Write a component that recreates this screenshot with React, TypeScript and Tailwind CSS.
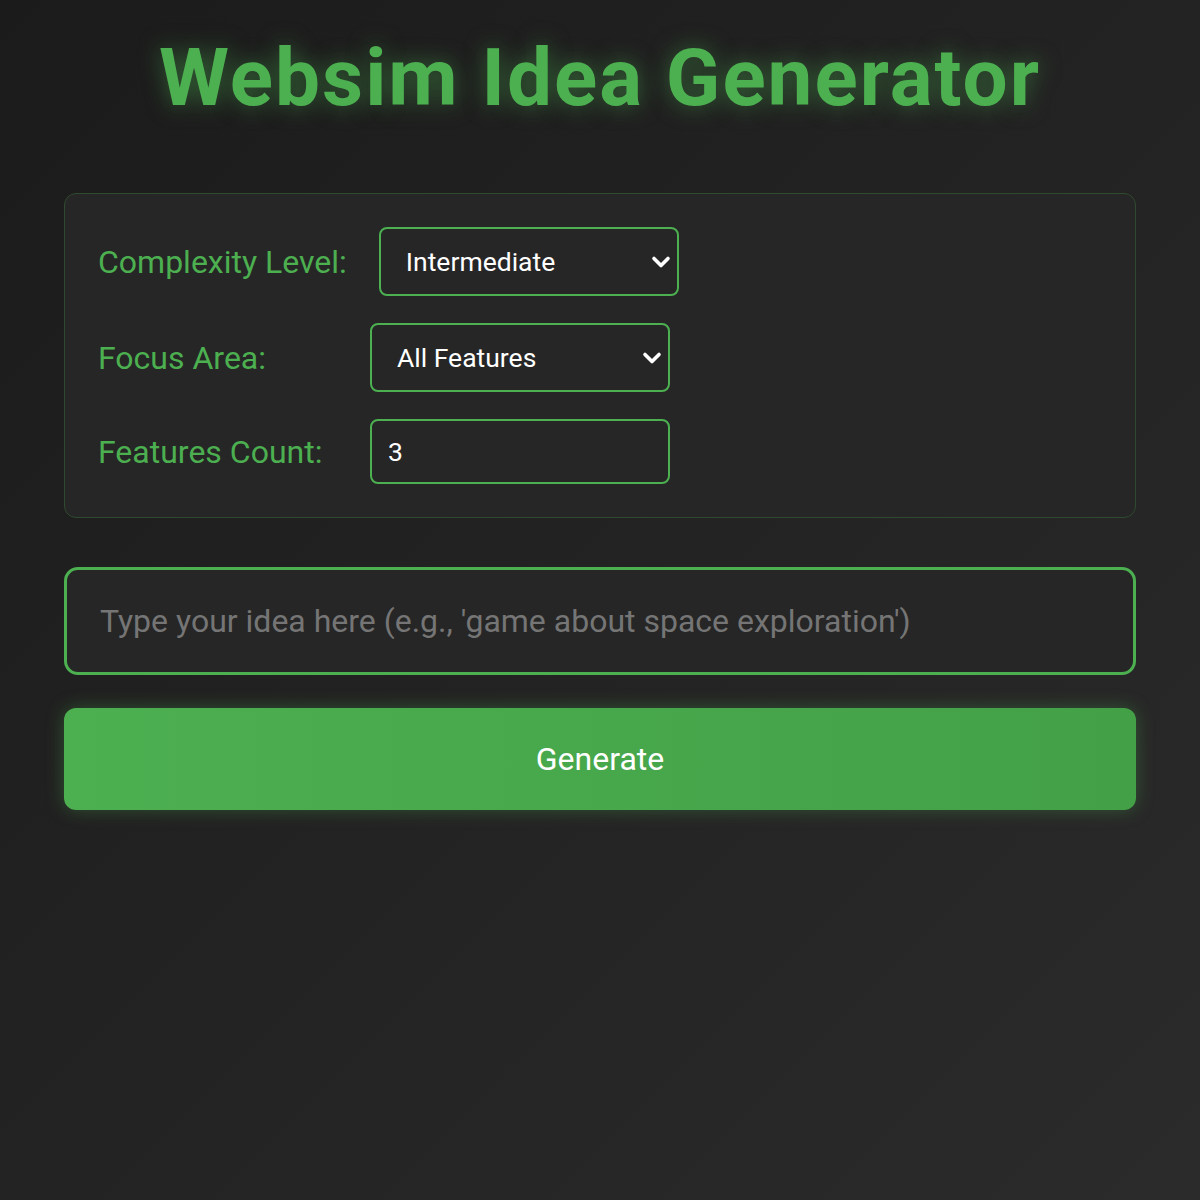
import { useState } from "react";

const Chevron = () => (
  <svg
    className="pointer-events-none absolute right-[8px] top-1/2 -translate-y-1/2"
    width="20"
    height="14"
    viewBox="0 0 20 14"
    fill="none"
  >
    <path d="M3 3.5l7 7 7-7" stroke="white" strokeWidth="3.6" strokeLinecap="round" strokeLinejoin="round" />
  </svg>
);

export default function App() {
  const [complexity, setComplexity] = useState("intermediate");
  const [focus, setFocus] = useState("all");
  const [count, setCount] = useState("3");
  const [idea, setIdea] = useState("");

  return (
    <div
      className="min-h-[1200px] w-full bg-gradient-to-br from-[#1b1b1b] to-[#2b2b2b] px-16 pt-[30px] text-white"
      style={{ fontFamily: "Roboto, 'Liberation Sans', sans-serif" }}
    >
      <h1 className="text-center text-[80px] font-bold leading-[96px] tracking-[2px] text-[#4caf50] [text-shadow:0_0_22px_rgba(76,175,80,0.5)]">
        Websim Idea Generator
      </h1>

      <div className="mt-[67px] rounded-xl border border-[#2f4a2f] bg-[#262626] px-[33px] py-[33px]">
        <div className="flex items-center">
          <label className="mr-[32px] min-w-[240px] text-[32px] leading-[40px] text-[#4caf50]">Complexity Level:</label>
          <div className="relative">
            <select
              value={complexity}
              onChange={(e) => setComplexity(e.target.value)}
              className="h-[69px] w-[300px] appearance-none rounded-lg border-2 border-[#4caf50] bg-[#262626] pl-[25px] text-[26.5px] text-white outline-none"
            >
              <option value="beginner">Beginner</option>
              <option value="intermediate">Intermediate</option>
              <option value="advanced">Advanced</option>
            </select>
            <Chevron />
          </div>
        </div>

        <div className="mt-[27px] flex items-center">
          <label className="mr-[32px] min-w-[240px] text-[32px] leading-[40px] text-[#4caf50]">Focus Area:</label>
          <div className="relative">
            <select
              value={focus}
              onChange={(e) => setFocus(e.target.value)}
              className="h-[69px] w-[300px] appearance-none rounded-lg border-2 border-[#4caf50] bg-[#262626] pl-[25px] text-[26.5px] text-white outline-none"
            >
              <option value="all">All Features</option>
              <option value="games">Games</option>
              <option value="tools">Tools</option>
            </select>
            <Chevron />
          </div>
        </div>

        <div className="mt-[27px] flex items-center">
          <label className="mr-[32px] min-w-[240px] text-[32px] leading-[40px] text-[#4caf50]">Features Count:</label>
          <input
            type="text"
            value={count}
            onChange={(e) => setCount(e.target.value)}
            className="h-[65px] w-[300px] rounded-lg border-2 border-[#4caf50] bg-[#262626] pl-[16px] text-[26.5px] text-white outline-none"
          />
        </div>
      </div>

      <input
        type="text"
        value={idea}
        onChange={(e) => setIdea(e.target.value)}
        placeholder="Type your idea here (e.g., 'game about space exploration')"
        className="mt-[49px] block h-[108px] w-full rounded-[14px] border-[3px] border-[#4caf50] bg-[#262626] px-[33px] text-[32px] text-white outline-none placeholder:text-[#757575]"
      />

      <button className="mt-[33px] h-[102px] w-full rounded-xl bg-gradient-to-r from-[#4caf50] to-[#43a047] text-[32px] text-white shadow-[0_0_18px_rgba(76,175,80,0.35)]">
        Generate
      </button>
    </div>
  );
}
